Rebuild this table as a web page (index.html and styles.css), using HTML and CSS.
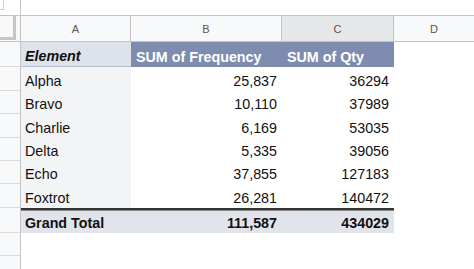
FILE: index.html
```html
<!DOCTYPE html>
<html>
<head>
<meta charset="utf-8">
<link rel="stylesheet" href="styles.css">
</head>
<body>
<div class="sheet">
  <div class="top-rh"><span class="top-box"></span></div>
  <div class="top"></div><div class="top"></div><div class="top"></div><div class="top"></div>

  <div class="corner"><span class="corner-box"></span></div>
  <div class="colh">A</div>
  <div class="colh">B</div>
  <div class="colh sel">C</div>
  <div class="colh last">D</div>

  <div class="rh"></div>
  <div class="c hdr-a">Element</div>
  <div class="c hdr">SUM of Frequency</div>
  <div class="c hdr">SUM of Qty</div>
  <div class="c"></div>

  <div class="rh"></div><div class="c lab">Alpha</div><div class="c num">25,837</div><div class="c num">36294</div><div class="c"></div>
  <div class="rh"></div><div class="c lab">Bravo</div><div class="c num">10,110</div><div class="c num">37989</div><div class="c"></div>
  <div class="rh"></div><div class="c lab">Charlie</div><div class="c num">6,169</div><div class="c num">53035</div><div class="c"></div>
  <div class="rh"></div><div class="c lab">Delta</div><div class="c num">5,335</div><div class="c num">39056</div><div class="c"></div>
  <div class="rh"></div><div class="c lab">Echo</div><div class="c num">37,855</div><div class="c num">127183</div><div class="c"></div>
  <div class="rh"></div><div class="c lab">Foxtrot</div><div class="c num">26,281</div><div class="c num">140472</div><div class="c"></div>

  <div class="rh"></div>
  <div class="c tot">Grand Total</div>
  <div class="c tot num">111,587</div>
  <div class="c tot num">434029</div>
  <div class="c"></div>

  <div class="rh"></div><div class="c"></div><div class="c"></div><div class="c"></div><div class="c"></div>
  <div class="rh"></div><div class="c"></div><div class="c"></div><div class="c"></div><div class="c"></div>
</div>
</body>
</html>
```

FILE: styles.css
```css
html, body {
  margin: 0;
  padding: 0;
  background: #ffffff;
  overflow: hidden;
}

.sheet {
  display: grid;
  grid-template-columns: 21px 110px 151px 112px 80px;
  grid-template-rows: 15px 27px 25px 24px 23px 24px 23px 23px 24px 25px 23px 23px;
  width: 474px;
  font-family: "Liberation Sans", Arial, sans-serif;
  font-size: 14.3px;
  color: #111;
}

.top-rh {
  border-right: 1px solid #c4c4c4;
  position: relative;
}
.top-box {
  position: absolute;
  left: -3px;
  top: -2px;
  width: 5px;
  height: 10px;
  border: 1px solid #d0d0d0;
}
.top { background: #fff; }

.corner {
  background: #f8f9fa;
  border-top: 1px solid #c4c4c4;
  border-right: 1px solid #c4c4c4;
  border-bottom: 1px solid #c4c4c4;
  position: relative;
}
.corner-box {
  position: absolute;
  left: 0;
  top: 0;
  width: 13px;
  height: 21px;
  border-right: 3px solid #c6c6c6;
  border-bottom: 3px solid #c6c6c6;
}

.colh {
  background: #f8f9fa;
  border-top: 1px solid #c4c4c4;
  border-right: 1px solid #c4c4c4;
  border-bottom: 1px solid #c4c4c4;
  display: flex;
  align-items: center;
  justify-content: center;
  font-size: 11px;
  color: #555;
}
.colh.sel { background: #e6e7e9; }
.colh.last { border-right: none; }

.rh {
  background: #f8f9fa;
  border-right: 1px solid #c4c4c4;
  border-bottom: 1px solid #dadada;
}

.c {
  display: flex;
  align-items: flex-end;
  padding: 0 5px 2px 4px;
  white-space: nowrap;
  overflow: hidden;
}

.hdr-a {
  background: #dee2ea;
  font-weight: bold;
  font-style: italic;
  border-bottom: 1px solid #b7bfcf;
}
.hdr {
  background: #7d8caf;
  color: #fff;
  font-weight: bold;
  padding-left: 5px;
}

.lab {
  background: #f3f4f6;
}

.num {
  justify-content: flex-end;
}

.tot {
  background: #e1e4ea;
  font-weight: bold;
  border-top: 2px solid #333;
  box-shadow: inset 0 1px 0 #8a8a8a;
}
```
